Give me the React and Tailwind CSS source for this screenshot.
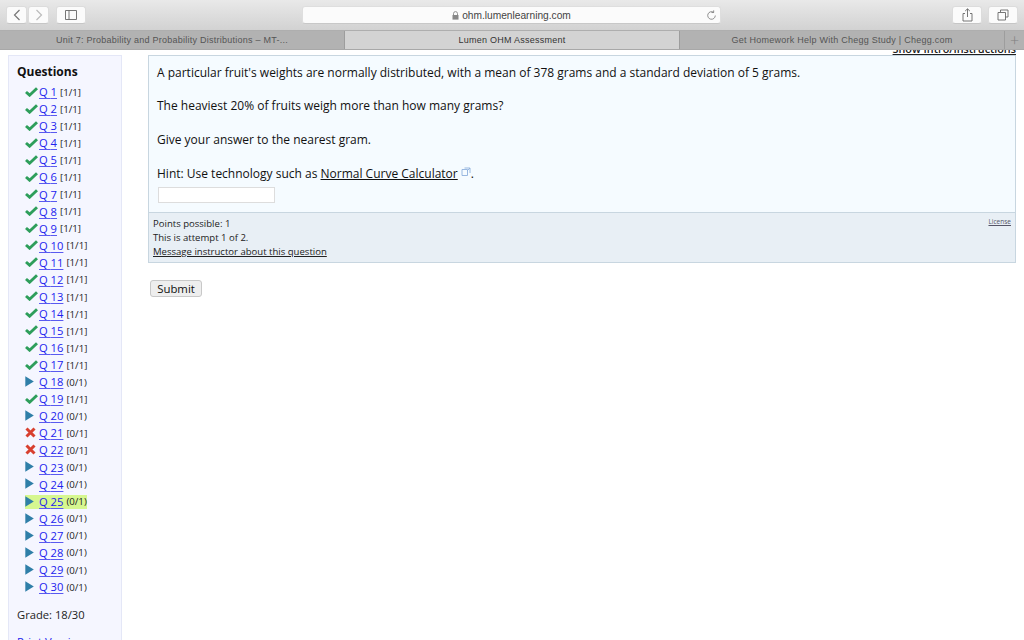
const rows = [
  [1,'c','[1/1]'],[2,'c','[1/1]'],[3,'c','[1/1]'],[4,'c','[1/1]'],[5,'c','[1/1]'],[6,'c','[1/1]'],[7,'c','[1/1]'],[8,'c','[1/1]'],[9,'c','[1/1]'],
  [10,'c','[1/1]'],[11,'c','[1/1]'],[12,'c','[1/1]'],[13,'c','[1/1]'],[14,'c','[1/1]'],[15,'c','[1/1]'],[16,'c','[1/1]'],[17,'c','[1/1]'],
  [18,'t','(0/1)'],[19,'c','[1/1]'],[20,'t','(0/1)'],[21,'x','[0/1]'],[22,'x','[0/1]'],[23,'t','(0/1)'],[24,'t','(0/1)'],[25,'t','(0/1)'],
  [26,'t','(0/1)'],[27,'t','(0/1)'],[28,'t','(0/1)'],[29,'t','(0/1)'],[30,'t','(0/1)'],
];

function Mark({ kind }) {
  if (kind === 'c') return (
    <svg width="13" height="10" viewBox="0 0 13 10" className="shrink-0 -mt-[2px]">
      <path d="M1 5 L4.6 8.2 L12 1.2" fill="none" stroke="#2e9e5b" strokeWidth="2.9" />
    </svg>
  );
  if (kind === 'x') return (
    <svg width="11" height="11" viewBox="0 0 11 11" className="shrink-0 -mt-[2px]">
      <path d="M1.5 1.5 L9.5 9.5 M9.5 1.5 L1.5 9.5" fill="none" stroke="#d8402f" strokeWidth="3" />
    </svg>
  );
  return (
    <svg width="9" height="11" viewBox="0 0 9 11" className="shrink-0 -mt-[2px]">
      <path d="M0.3 0.3 L8.8 5.5 L0.3 10.7 Z" fill="#2f7fa8" />
    </svg>
  );
}

function Row({ n, kind, score }) {
  const current = n === 25;
  return (
    <div className="flex items-center h-[17.07px] pl-[16px]">
      <div className={`flex items-center h-[14px] ${current ? 'bg-[#d6f790]' : ''}`}>
        <div className="w-[14px] flex justify-start shrink-0"><Mark kind={kind} /></div>
        <a className="text-[11.2px] text-[#2222ee] underline underline-offset-2 decoration-[#5a5af0]">Q {n}</a>
        <span className="text-[9.7px] text-[#222222] ml-[3px] mt-[1px]">{score}</span>
      </div>
    </div>
  );
}

function Tab({ children, active, width }) {
  return (
    <div className={`${width} h-full flex items-center justify-center border-r border-[#9d9d9d] text-[9px] font-['Liberation_Sans',sans-serif] tracking-[0.25px] ${active ? 'bg-[#d3d3d3] text-[#333333]' : 'bg-[#b2b2b2] text-[#555555]'}`}>
      <span className="translate-y-[1px]">{children}</span>
    </div>
  );
}

function ToolBtn({ width, children, className = '' }) {
  return (
    <div className={`${width} h-[18px] bg-[#fbfbfb] rounded-[3px] border border-[#dcdcdc] border-b-[#c6c6c6] flex items-center justify-center ${className}`}>
      {children}
    </div>
  );
}

export default function App() {
  return (
    <div className="w-[1024px] h-[640px] overflow-hidden bg-white flex flex-col font-['Open_Sans',sans-serif] text-[#111111]">
      <div className="relative z-10 h-[30px] shrink-0 bg-gradient-to-b from-[#e9e9e9] to-[#d2d2d2] flex items-center pl-[6px] pr-[6px]">
        <ToolBtn width="w-[21px]">
          <svg width="8" height="12" viewBox="0 0 8 12"><path d="M6.5 1 L1.5 6 L6.5 11" fill="none" stroke="#777777" strokeWidth="1.2" /></svg>
        </ToolBtn>
        <ToolBtn width="w-[21px]" className="ml-[1px]">
          <svg width="8" height="12" viewBox="0 0 8 12"><path d="M1.5 1 L6.5 6 L1.5 11" fill="none" stroke="#bbbbbb" strokeWidth="1.2" /></svg>
        </ToolBtn>
        <ToolBtn width="w-[30px]" className="ml-[7px]">
          <svg width="12" height="10" viewBox="0 0 12 10"><path d="M0.5 0.5 H11.5 V9.5 H0.5 Z M4 0.5 V9.5" fill="none" stroke="#666666" strokeWidth="0.9" /></svg>
        </ToolBtn>
        <div className="ml-[216px] w-[419px] h-[18px] bg-[#fbfbfb] rounded-[3px] border border-[#dedede] border-b-[#c8c8c8] relative flex items-center justify-center pt-[1px] text-[#444444] text-[10.2px] font-['Liberation_Sans',sans-serif]">
          <svg width="7" height="9" viewBox="0 0 7 9" className="mr-[3px]"><path d="M1.5 4 V2.6 a2 2 0 0 1 4 0 V4" fill="none" stroke="#888888" strokeWidth="0.9" /><rect x="0.5" y="4" width="6" height="4.6" fill="#888888" /></svg>
          <span>ohm.lumenlearning.com</span>
          <svg width="13" height="13" viewBox="0 0 24 24" className="absolute right-[2px] top-[2px]"><path d="M19 12 a7 7 0 1 1 -3 -5.8 M16 2.5 V6.5 H12" fill="none" stroke="#777777" strokeWidth="1.5" /></svg>
        </div>
        <div className="flex-1" />
        <ToolBtn width="w-[30px]">
          <svg width="11" height="14" viewBox="0 0 11 14"><path d="M3 5.5 H1 V13 H10 V5.5 H8 M5.5 9 V1 M3.2 3 L5.5 0.8 L7.8 3" fill="none" stroke="#666666" strokeWidth="0.9" /></svg>
        </ToolBtn>
        <ToolBtn width="w-[30px]" className="ml-[6px]">
          <svg width="12" height="12" viewBox="0 0 12 12"><path d="M3.5 3 V1 H11 V8 H8.5 M1 3.5 H8.5 V11 H1 Z" fill="none" stroke="#666666" strokeWidth="0.9" /></svg>
        </ToolBtn>
      </div>

      <div className="relative z-10 h-[20px] shrink-0 flex bg-[#b2b2b2] border-t border-[#aeaeae] border-b border-b-[#a8a8a8]">
        <Tab width="w-[345px]">Unit 7: Probability and Probability Distributions – MT-...</Tab>
        <Tab width="w-[335px]" active>Lumen OHM Assessment</Tab>
        <Tab width="w-[325px]">Get Homework Help With Chegg Study | Chegg.com</Tab>
        <div className="flex-1 flex items-center justify-center text-[#808080] text-[16px] font-light">+</div>
      </div>

      <div className="flex-1 min-h-0 flex pl-[8px] pt-[5px]">
        <aside className="w-[114px] shrink-0 h-[600px] bg-[#f5f6ff] border border-[#e4e7f7] pl-[8px] pr-0 pt-[7px]">
          <div className="text-[12px] font-bold text-[#111111] leading-[18px] pb-[3px]">Questions</div>
          <div className="-ml-[8px]">
            {rows.map(([n, k, s]) => <Row key={n} n={n} kind={k} score={s} />)}
          </div>
          <div className="text-[11.2px] text-[#222222] mt-[10px] leading-[18px]">Grade: 18/30</div>
          <a className="block text-[11.2px] text-[#2222ee] mt-[10px] underline">Print Version</a>
        </aside>

        <main className="ml-[26px] w-[868px] shrink-0">
          <div className="-mt-[12px] h-[12px] flex justify-end text-[10.8px] leading-[12px]">
            <a className="underline font-semibold text-[#222222]">Show Intro/Instructions</a>
          </div>
          <div className="border border-[#c8d6e0] bg-[#f5fbff]">
            <div className="pl-[8px] pt-[8.5px] h-[156px] text-[12px] leading-[16.85px]">
              <p>A particular fruit's weights are normally distributed, with a mean of 378 grams and a standard deviation of 5 grams.</p>
              <p className="mt-[16.85px]">The heaviest 20% of fruits weigh more than how many grams?</p>
              <p className="mt-[16.85px]">Give your answer to the nearest gram.</p>
              <p className="mt-[16.85px] flex items-center">
                Hint: Use technology such as&nbsp;<a className="underline">Normal Curve Calculator</a>
                <svg width="10" height="10" viewBox="0 0 10 10" className="ml-[3px] -mt-[3px]"><path d="M1 2.5 H6.5 V8.5 H1 Z M3.5 1 H9 V6 M6 4 L9 1" fill="none" stroke="#8fb0dc" strokeWidth="0.9" /></svg>.
              </p>
              <div className="ml-[1px] mt-[4.5px] w-[117px] h-[16px] bg-white border border-[#dddddd]" />
            </div>
            <div className="border-t border-[#c8d6e0] bg-[#e8eff5] h-[50px] pl-[4px] pr-[4px] pt-[4px] text-[9.55px] leading-[14px] text-[#222222] flex justify-between">
              <div>
                <div>Points possible: 1</div>
                <div>This is attempt 1 of 2.</div>
                <a className="underline">Message instructor about this question</a>
              </div>
              <a className="underline text-[6.5px] leading-[10px] text-[#555566]">License</a>
            </div>
          </div>
          <button className="block ml-[2px] mt-[17px] w-[52px] h-[17px] bg-[#eeeeee] border border-[#c8c8c8] rounded-[3px] text-[11.4px] leading-[15px] text-[#111111]">Submit</button>
        </main>
      </div>
    </div>
  );
}
